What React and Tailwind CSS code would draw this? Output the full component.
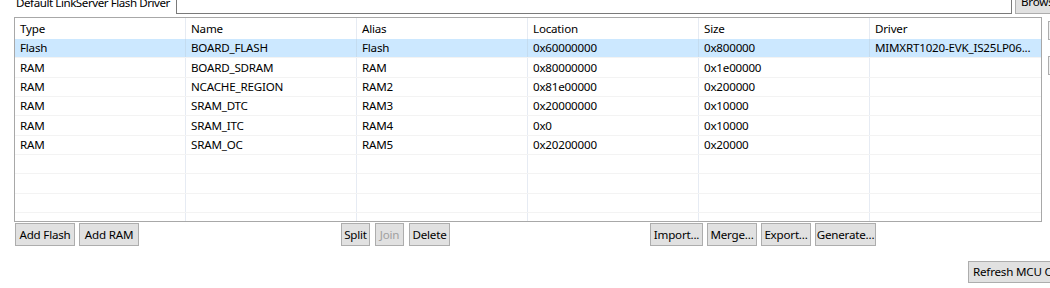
import React from "react";

const columns = ["Type", "Name", "Alias", "Location", "Size", "Driver"];

const rows = [
  ["Flash", "BOARD_FLASH", "Flash", "0x60000000", "0x800000", "MIMXRT1020-EVK_IS25LP06..."],
  ["RAM", "BOARD_SDRAM", "RAM", "0x80000000", "0x1e00000", ""],
  ["RAM", "NCACHE_REGION", "RAM2", "0x81e00000", "0x200000", ""],
  ["RAM", "SRAM_DTC", "RAM3", "0x20000000", "0x10000", ""],
  ["RAM", "SRAM_ITC", "RAM4", "0x0", "0x10000", ""],
  ["RAM", "SRAM_OC", "RAM5", "0x20200000", "0x20000", ""],
  ["", "", "", "", "", ""],
  ["", "", "", "", "", ""],
  ["", "", "", "", "", ""],
  ["", "", "", "", "", ""],
];

function Btn({ children, w, disabled }) {
  return (
    <div
      className={`shrink-0 h-[23px] flex items-center justify-center border border-[#adadad] bg-[#e1e1e1] whitespace-nowrap ${
        disabled ? "text-[#a0a0a0]" : "text-[#000]"
      }`}
      style={{ width: w }}
    >
      {children}
    </div>
  );
}

export default function App() {
  return (
    <div
      className="w-[1050px] h-[288px] overflow-hidden bg-white text-[11.6px] tracking-[-0.2px] text-black leading-none"
      style={{ fontFamily: '"Noto Sans", "Segoe UI", sans-serif' }}
    >
      {/* driver row */}
      <div className="flex items-end h-[26px] -mt-[12px] w-[1100px]">
        <div className="shrink-0 pl-[16px] w-[176px] pb-[5px] whitespace-nowrap tracking-[-0.45px]">
          Default LinkServer Flash Driver
        </div>
        <div className="shrink-0 w-[836px] h-[24px] border border-[#7a7a7a] border-t-0 bg-white" />
        <div className="shrink-0 ml-[3px] w-[60px] h-[26px] border border-[#adadad] bg-[#e1e1e1] flex items-end pb-[5px] pl-[5px] whitespace-nowrap">
          Browse...
        </div>
      </div>

      {/* table */}
      <div className="flex mt-[3px] w-[1100px]">
        <div className="shrink-0 ml-[14px] w-[1028px] h-[205px] border border-[#a8a8a8] overflow-hidden">
          <div className="flex h-[21px] items-center">
            {columns.map((c, i) => (
              <div
                key={c}
                className={`shrink-0 h-full flex items-center pl-[5px] ${
                  i < 5 ? "w-[171px] border-r border-[#e6ebf3]" : "flex-1"
                }`}
              >
                {c}
              </div>
            ))}
          </div>
          {rows.map((r, ri) => (
            <div
              key={ri}
              className={`flex h-[19.33px] border-b border-[#f3f3f3] ${
                ri === 0 ? "bg-[#cce8ff]" : ""
              }`}
            >
              {r.map((v, i) => (
                <div
                  key={i}
                  className={`h-full flex items-center pl-[5px] whitespace-nowrap overflow-hidden ${
                    i < 5
                      ? `shrink-0 w-[171px] border-r ${ri === 0 ? "border-[#c4dcf0]" : "border-[#e6ebf3]"}`
                      : "flex-1"
                  }`}
                >
                  {v}
                </div>
              ))}
            </div>
          ))}
        </div>
        <div className="shrink-0 ml-[6px] flex flex-col gap-[16px] pt-[4px]">
          <div className="w-[20px] h-[19px] border border-[#adadad] bg-[#f0f0f0]" />
          <div className="w-[20px] h-[19px] border border-[#adadad] bg-[#f0f0f0]" />
        </div>
      </div>

      {/* action buttons */}
      <div className="flex mt-[1px] ml-[15px]">
        <div className="flex gap-[4px]">
          <Btn w={60}>Add Flash</Btn>
          <Btn w={60}>Add RAM</Btn>
        </div>
        <div className="flex gap-[5px] ml-[202px]">
          <Btn w={29}>Split</Btn>
          <Btn w={29} disabled>
            Join
          </Btn>
          <Btn w={41}>Delete</Btn>
        </div>
        <div className="flex gap-[4px] ml-[200px]">
          <Btn w={53}>Import...</Btn>
          <Btn w={50}>Merge...</Btn>
          <Btn w={50}>Export...</Btn>
          <Btn w={61}>Generate...</Btn>
        </div>
      </div>

      <div className="flex mt-[15px] ml-[968px] w-[200px]">
        <div className="shrink-0 h-[22px] w-[110px] flex items-center pl-[4px] border border-[#adadad] bg-[#e1e1e1] whitespace-nowrap">
          Refresh MCU Cache
        </div>
      </div>
    </div>
  );
}
